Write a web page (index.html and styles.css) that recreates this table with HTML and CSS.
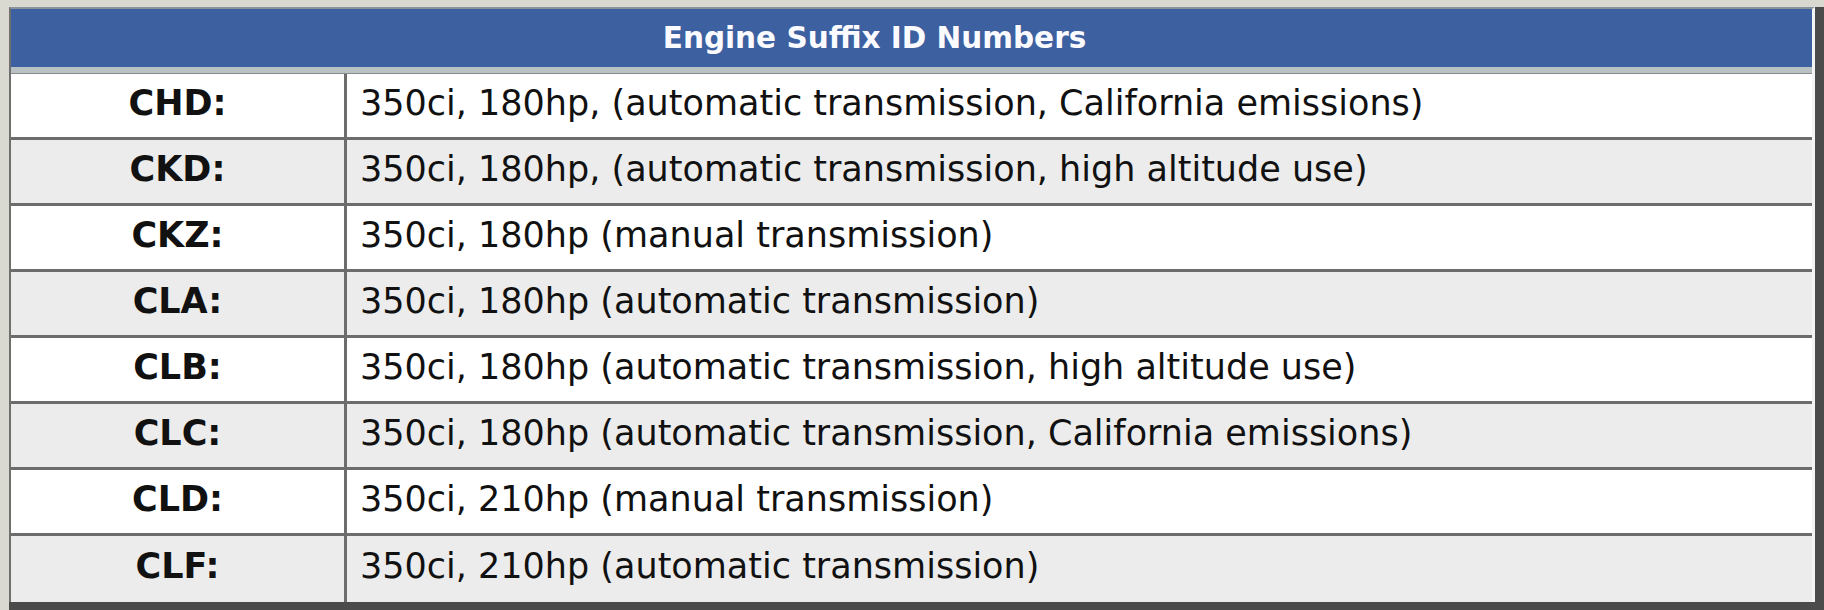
FILE: index.html
```html
<!DOCTYPE html>
<html>
<head>
<meta charset="utf-8">
<link rel="stylesheet" href="styles.css">
</head>
<body>
<div class="wrap">
  <div class="table">
    <div class="header"><span class="title">Engine Suffix ID Numbers</span></div>
    <div class="row odd"><div class="code">CHD:</div><div class="desc">350ci, 180hp, (automatic transmission, California emissions)</div></div>
    <div class="row even"><div class="code">CKD:</div><div class="desc">350ci, 180hp, (automatic transmission, high altitude use)</div></div>
    <div class="row odd"><div class="code">CKZ:</div><div class="desc">350ci, 180hp (manual transmission)</div></div>
    <div class="row even"><div class="code">CLA:</div><div class="desc">350ci, 180hp (automatic transmission)</div></div>
    <div class="row odd"><div class="code">CLB:</div><div class="desc">350ci, 180hp (automatic transmission, high altitude use)</div></div>
    <div class="row even"><div class="code">CLC:</div><div class="desc">350ci, 180hp (automatic transmission, California emissions)</div></div>
    <div class="row odd"><div class="code">CLD:</div><div class="desc">350ci, 210hp (manual transmission)</div></div>
    <div class="row even last"><div class="code">CLF:</div><div class="desc">350ci, 210hp (automatic transmission)</div></div>
  </div>
</div>
</body>
</html>
```
FILE: styles.css
```css
html, body {
  margin: 0;
  padding: 0;
  width: 1824px;
  height: 610px;
  overflow: hidden;
  background: #d9d9d2;
}
.wrap {
  box-sizing: border-box;
  margin: 7px 0 0 9px;
  width: 1815px;
  height: 603px;
  border-right: 9px solid #4b4b4b;
  border-bottom: 8px solid #4b4b4b;
  display: flex;
}
.table {
  flex: 1;
  box-sizing: border-box;
  border-left: 2px solid #6f6f6f;
  border-top: 2px solid #8c929c;
  border-right: 3px solid #f2f4f6;
  display: flex;
  flex-direction: column;
  font-family: "DejaVu Sans", Verdana, sans-serif;
  color: #111;
}
.header {
  height: 58px;
  background: #3d60a0;
  border-bottom: 6px solid #b8c2c4;
  box-shadow: 0 1px 0 #8a8a8a;
  margin-bottom: 1px;
  display: flex;
  align-items: center;
  justify-content: center;
  padding-right: 74px;
}
.title {
  font-family: "DejaVu Sans", Verdana, sans-serif;
  font-weight: bold;
  font-size: 29.5px;
  color: #fbfbff;
}
.row {
  display: grid;
  grid-template-columns: 336px 1fr;
  height: 66px;
  box-sizing: border-box;
  border-bottom: 3px solid #6c6c6c;
  font-size: 35px;
}
.row.last {
  border-bottom: none;
}
.odd { background: #ffffff; }
.even { background: #ececec; }
.code {
  border-right: 3px solid #6c6c6c;
  display: flex;
  align-items: center;
  justify-content: center;
  font-weight: bold;
  padding-bottom: 6px;
}
.desc {
  display: flex;
  align-items: center;
  padding-left: 13px;
  padding-bottom: 6px;
}
```
